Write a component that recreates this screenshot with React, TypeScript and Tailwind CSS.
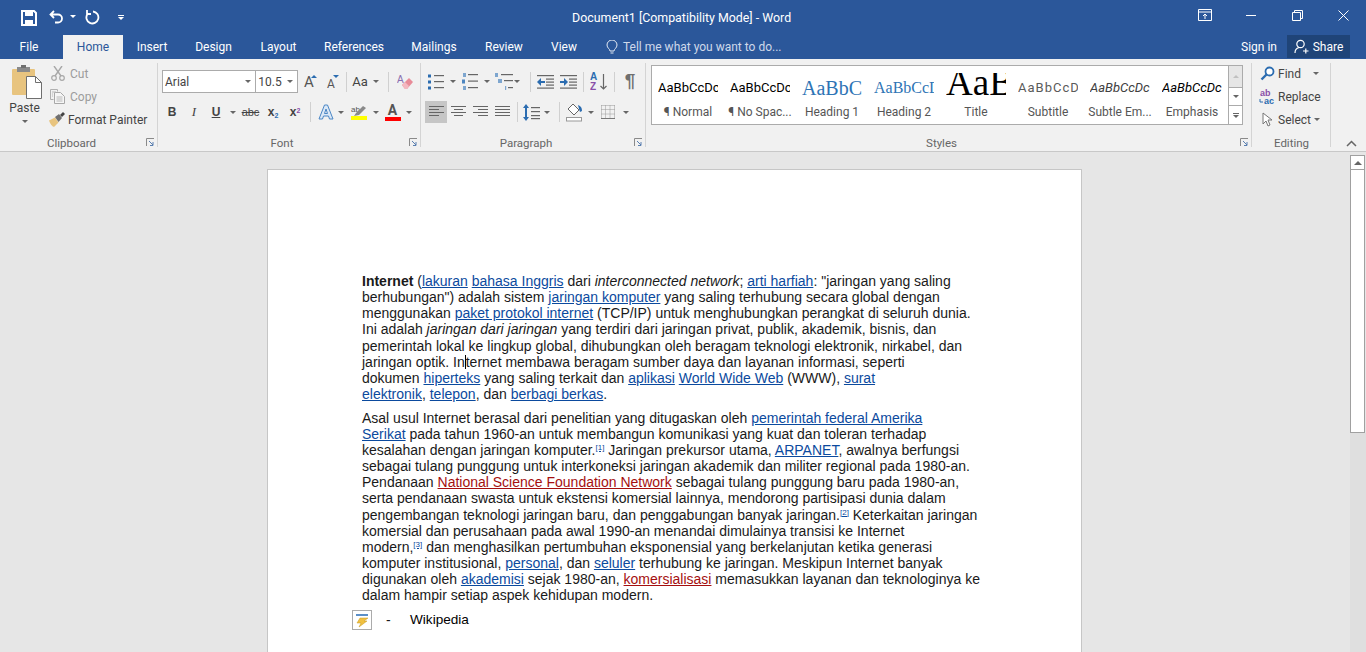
import type { ReactNode } from 'react';

const ui = "font-['Roboto','Noto_Sans',sans-serif]";

const tabs = [
  { label: 'Insert', w: 'w-[58px]' },
  { label: 'Design', w: 'w-[65px]' },
  { label: 'Layout', w: 'w-[65px]' },
  { label: 'References', w: 'w-[86px]' },
  { label: 'Mailings', w: 'w-[74px]' },
  { label: 'Review', w: 'w-[66px]' },
  { label: 'View', w: 'w-[54px]' },
];

const styleItems = [
  { label: '¶ Normal', preview: 'AaBbCcDc', cls: 'text-[13px] text-black' },
  { label: '¶ No Spac...', preview: 'AaBbCcDc', cls: 'text-[13px] text-black' },
  { label: 'Heading 1', preview: 'AaBbC', cls: "font-['Liberation_Serif',serif] text-[20px] text-[#2e74b5]" },
  { label: 'Heading 2', preview: 'AaBbCcD', cls: "font-['Liberation_Serif',serif] text-[16px] text-[#2e74b5]" },
  { label: 'Title', preview: 'AaB', cls: "-translate-y-[6px] font-['Liberation_Serif',serif] text-[37px] leading-[37px] text-black" },
  { label: 'Subtitle', preview: 'AaBbCcD', cls: 'text-[13px] tracking-[1px] text-[#5a5a5a]' },
  { label: 'Subtle Em...', preview: 'AaBbCcDc', cls: 'text-[13px] italic text-[#404040]' },
  { label: 'Emphasis', preview: 'AaBbCcDc', cls: 'text-[13px] italic text-black' },
];

function Caret({ w = 'w-[12px]', color = 'border-t-[#666]' }: { w?: string; color?: string }) {
  return (
    <div className={`flex justify-center ${w}`}>
      <div className={`h-0 w-0 border-x-[3px] border-t-[3px] border-x-transparent ${color}`} />
    </div>
  );
}

function Launcher() {
  return (
    <svg width="9" height="9" viewBox="0 0 9 9" className="shrink-0">
      <path d="M.5 8V.5H8" fill="none" stroke="#8a8a8a" />
      <path d="M3 3l4 4M7 4v3.5H4" fill="none" stroke="#5a7fb0" />
    </svg>
  );
}

function VSep() {
  return <div className="h-[20px] w-px bg-[#d0d0d0]" />;
}

function Cell({ w, children, active }: { w: string; children: ReactNode; active?: boolean }) {
  return (
    <div className={`flex h-[22px] items-center justify-center ${w} ${active ? 'bg-[#c6c6c6]' : ''}`}>
      {children}
    </div>
  );
}

function Group({ w, label, launcher, children }: { w: string; label: string; launcher?: boolean; children: ReactNode }) {
  return (
    <div className={`relative flex h-[89px] shrink-0 flex-col ${w}`}>
      <div className="min-h-0 flex-1">{children}</div>
      <div className={`h-[17px] pt-px text-center text-[11.5px] leading-[17px] text-[#666] ${launcher ? 'pr-[15px]' : ''}`}>{label}</div>
      {launcher && (
        <div className="absolute bottom-[4px] right-[3px] flex">
          <Launcher />
        </div>
      )}
      <div className="absolute right-0 top-[1px] h-[84px] w-px bg-[#d4d4d4]" />
    </div>
  );
}

function Lines({ rows, color = '#666', w = 15 }: { rows: [number, number][]; color?: string; w?: number }) {
  return (
    <svg width={w} height="14" viewBox={`0 0 ${w} 14`}>
      {rows.map(([a, b], i) => (
        <rect key={i} x={a} y={1 + i * 3} width={b - a} height="1" fill={color} />
      ))}
    </svg>
  );
}

function Bullets() {
  return (
    <svg width="16" height="16" viewBox="0 0 16 16">
      {[2, 8, 14].map((y) => (
        <g key={y}>
          <rect x="0" y={y - 1.5} width="3" height="3" fill="#2b6cb0" />
          <rect x="6" y={y - 1} width="10" height="1.2" fill="#666" />
        </g>
      ))}
    </svg>
  );
}

function Numbering() {
  return (
    <svg width="16" height="17" viewBox="0 0 16 17">
      {[2, 8.5, 15].map((y, i) => (
        <g key={y}>
          <rect x={i === 1 ? 0 : 1} y={y - 2} width="3" height="4" fill={i === 1 ? '#4e86c0' : '#7ea6cf'} />
          <rect x="6" y={y - 1} width="10" height="1.2" fill="#666" />
        </g>
      ))}
    </svg>
  );
}

function Multilevel() {
  return (
    <svg width="18" height="17" viewBox="0 0 18 17">
      <rect x="0" y="0" width="3" height="4" fill="#7ea6cf" />
      <rect x="6" y="1" width="12" height="1.2" fill="#666" />
      <rect x="3" y="6" width="4" height="4" fill="#7ea6cf" />
      <rect x="9" y="7" width="9" height="1.2" fill="#666" />
      <rect x="10" y="13" width="1.2" height="4" fill="#7ea6cf" />
      <rect x="13" y="14" width="5" height="1.2" fill="#666" />
    </svg>
  );
}

function Indent({ flip }: { flip?: boolean }) {
  return (
    <svg width="17" height="14" viewBox="0 0 17 14">
      <rect x="0" y="0" width="17" height="1.2" fill="#666" />
      <rect x="0" y="12.5" width="17" height="1.2" fill="#666" />
      {[3.5, 6.5, 9.5].map((y) => (
        <rect key={y} x="9" y={y} width="8" height="1.2" fill="#666" />
      ))}
      <path d={flip ? 'M0 6h4V3l4 4-4 4V8H0z' : 'M8 6H4V3L0 7l4 4V8h4z'} fill="#2b6cb0" />
    </svg>
  );
}

function Sort() {
  return (
    <svg width="18" height="19" viewBox="0 0 18 19">
      <text x="0" y="8" fontSize="10" fontWeight="700" fill="#2b6cb0" fontFamily="Liberation Sans">A</text>
      <text x="0" y="18" fontSize="10" fontWeight="700" fill="#8a4fa8" fontFamily="Liberation Sans">Z</text>
      <path d="M13.5 2v15M10.5 14l3 3 3-3" fill="none" stroke="#666" strokeWidth="1.2" />
    </svg>
  );
}

function LineSpacing() {
  return (
    <svg width="17" height="17" viewBox="0 0 17 17">
      <path d="M3 0l3 4H4v9h2l-3 4-3-4h2V4H0z" fill="#2b6cb0" />
      {[3, 7, 11, 14].map((y) => (
        <rect key={y} x="8" y={y} width="9" height="1.2" fill="#666" />
      ))}
    </svg>
  );
}

function Shading() {
  return (
    <svg width="17" height="19" viewBox="0 0 17 19">
      <path d="M7 1l6 6-5 5-6-6z" fill="#fff" stroke="#666" />
      <path d="M12 2c3 1 4 3 4 6l-2 1-1-3z" fill="#2b6cb0" />
      <rect x="0.5" y="14.5" width="15" height="3.5" fill="#fff" stroke="#999" />
    </svg>
  );
}

function Borders() {
  return (
    <svg width="14" height="14" viewBox="0 0 14 14">
      <path d="M.5 .5h13M.5 4.5h13M.5 9h13M.5 .5v13M4.5 .5v13M9 .5v13M13.5 .5v13" fill="none" stroke="#999" strokeDasharray="1 1" />
      <path d="M0 13.5h14" stroke="#777" />
    </svg>
  );
}

function PasteIcon() {
  return (
    <svg width="31" height="34" viewBox="0 0 31 34" className="ml-[3px]">
      <rect x="1" y="4" width="23" height="26" rx="1" fill="#e8c47f" />
      <rect x="6" y="2" width="13" height="5" fill="#8a8a8a" />
      <rect x="10" y="0" width="5" height="3" fill="#6f6f6f" />
      <path d="M15.5 11.5h9l6 6v16h-15z" fill="#fff" stroke="#6f6f6f" />
      <path d="M24.5 11.5v6h6" fill="none" stroke="#6f6f6f" />
    </svg>
  );
}

function CutIcon() {
  return (
    <svg width="14" height="15" viewBox="0 0 14 15">
      <path d="M3 0l7 10M11 0L4 10" fill="none" stroke="#a8a8a8" strokeWidth="1.4" />
      <circle cx="3" cy="12" r="2.3" fill="none" stroke="#a8a8a8" strokeWidth="1.2" />
      <circle cx="11" cy="12" r="2.3" fill="none" stroke="#a8a8a8" strokeWidth="1.2" />
    </svg>
  );
}

function CopyIcon() {
  return (
    <svg width="15" height="15" viewBox="0 0 15 15">
      <path d="M.5.5h7v2M.5.5v10h3" fill="none" stroke="#b0b0b0" />
      <path d="M4.5 3.5h6l4 4v7h-10z" fill="#f6f6f6" stroke="#a8a8a8" />
      <path d="M6.5 8h6M6.5 10h6M6.5 12h6M2 3h4M2 5h1M2 7h1" stroke="#b8b8b8" />
    </svg>
  );
}

function PainterIcon() {
  return (
    <svg width="16" height="15" viewBox="0 0 16 15">
      <path d="M0 8.5l6-3 3.5 5L5 15c-2-.5-4-3.5-5-6.5z" fill="#e8c47f" />
      <path d="M6 5l4-3 3 4-3.5 4z" fill="#6f6f6f" />
      <path d="M11 3l3-3 2 2-3 3z" fill="#444" />
    </svg>
  );
}

function EraserIcon() {
  return (
    <svg width="16" height="16" viewBox="0 0 16 16">
      <text x="0" y="9" fontSize="10" fill="#8a6fb0" fontFamily="Liberation Sans">A</text>
      <path d="M5 11l7-7 4 4-6 7H8z" fill="#e88b98" />
      <path d="M5 11l3-3 4 4-2 3H8z" fill="#f4b8c0" />
    </svg>
  );
}

function TextEffects() {
  return (
    <svg width="16" height="16" viewBox="0 0 16 16">
      <path d="M1 15L6.5 1h3L15 15h-3.5l-1-3h-5l-1 3zM6.5 9.5h3L8 5z" fill="#dbe8f6" stroke="#4a86c5" strokeWidth="1" />
    </svg>
  );
}

function HighlightIcon() {
  return (
    <div className="flex w-[16px] flex-col">
      <svg width="16" height="12" viewBox="0 0 16 12">
        <text x="0" y="8" fontSize="8" fill="#555" fontFamily="Liberation Sans">ab</text>
        <path d="M3 12l2-3 7-7 3 2-7 7z" fill="#8a8a8a" />
      </svg>
      <div className="h-[4px] bg-[#ffff00]" />
    </div>
  );
}

function ColorA() {
  return (
    <div className="flex w-[16px] flex-col items-center">
      <span className="text-[14px] font-bold leading-[13px] text-[#555]">A</span>
      <div className="h-[4px] w-full bg-[#ff0000]" />
    </div>
  );
}

function GrowA({ shrink }: { shrink?: boolean }) {
  return (
    <div className="relative flex h-[16px] w-[16px] items-end justify-center">
      <span className={`leading-none text-[#555] ${shrink ? 'text-[12px]' : 'text-[15px]'}`}>A</span>
      <div className={`absolute right-0 top-[1px] h-0 w-0 border-x-[3px] border-x-transparent ${shrink ? 'border-t-[3px] border-t-[#2b6cb0]' : 'border-b-[3px] border-b-[#2b6cb0]'}`} />
    </div>
  );
}

function Doc() {
  const a = 'text-[#0b4a9e] underline';
  const r = 'text-[#a50f0f] underline';
  const s = 'relative -top-[5px] text-[8px] leading-none text-[#0b4a9e] underline';
  return (
    <div className="font-['Liberation_Sans',Arial,sans-serif] text-[14px] leading-[16.1px] text-[#1a1a1a]">
      <p className="whitespace-nowrap">
        <b>Internet</b> (<span className={a}>lakuran</span> <span className={a}>bahasa Inggris</span> dari <i>interconnected network</i>; <span className={a}>arti harfiah</span>: "jaringan yang saling<br />
        berhubungan") adalah sistem <span className={a}>jaringan komputer</span> yang saling terhubung secara global dengan<br />
        menggunakan <span className={a}>paket protokol internet</span> (TCP/IP) untuk menghubungkan perangkat di seluruh dunia.<br />
        Ini adalah <i>jaringan dari jaringan</i> yang terdiri dari jaringan privat, publik, akademik, bisnis, dan<br />
        pemerintah lokal ke lingkup global, dihubungkan oleh beragam teknologi elektronik, nirkabel, dan<br />
        jaringan optik. In<span className="inline-block h-[14px] w-0 border-l border-black align-[-2px]" />ternet membawa beragam sumber daya dan layanan informasi, seperti<br />
        dokumen <span className={a}>hiperteks</span> yang saling terkait dan <span className={a}>aplikasi</span> <span className={a}>World Wide Web</span> (WWW), <span className={a}>surat</span><br />
        <span className={a}>elektronik</span>, <span className={a}>telepon</span>, dan <span className={a}>berbagi berkas</span>.
      </p>
      <p className="mt-2 whitespace-nowrap">
        Asal usul Internet berasal dari penelitian yang ditugaskan oleh <span className={a}>pemerintah federal Amerika</span><br />
        <span className={a}>Serikat</span> pada tahun 1960-an untuk membangun komunikasi yang kuat dan toleran terhadap<br />
        kesalahan dengan jaringan komputer.<span className={s}>[1]</span> Jaringan prekursor utama, <span className={a}>ARPANET</span>, awalnya berfungsi<br />
        sebagai tulang punggung untuk interkoneksi jaringan akademik dan militer regional pada 1980-an.<br />
        Pendanaan <span className={r}>National Science Foundation Network</span> sebagai tulang punggung baru pada 1980-an,<br />
        serta pendanaan swasta untuk ekstensi komersial lainnya, mendorong partisipasi dunia dalam<br />
        pengembangan teknologi jaringan baru, dan penggabungan banyak jaringan.<span className={s}>[2]</span> Keterkaitan jaringan<br />
        komersial dan perusahaan pada awal 1990-an menandai dimulainya transisi ke Internet<br />
        modern,<span className={s}>[3]</span> dan menghasilkan pertumbuhan eksponensial yang berkelanjutan ketika generasi<br />
        komputer institusional, <span className={a}>personal</span>, dan <span className={a}>seluler</span> terhubung ke jaringan. Meskipun Internet banyak<br />
        digunakan oleh <span className={a}>akademisi</span> sejak 1980-an, <span className={r}>komersialisasi</span> memasukkan layanan dan teknologinya ke<br />
        dalam hampir setiap aspek kehidupan modern.
      </p>
      <div className="-ml-[10px] mt-[7px] flex h-[20px] items-center">
        <div className="flex h-[20px] w-[20px] items-center justify-center border border-[#ababab] bg-white">
          <svg width="15" height="15" viewBox="0 0 15 15">
            <rect x="1" y="1" width="12" height="2" fill="#5b8fc7" />
            <path d="M5 5h8L9 8h3l-8 6 2-4H2z" fill="#f0c040" stroke="#c89a20" strokeWidth=".5" />
          </svg>
        </div>
        <span className="ml-[14px] w-[24px]">-</span>
        <span className="text-[13.6px] text-black">Wikipedia</span>
      </div>
    </div>
  );
}

export default function App() {
  return (
    <div className={`flex h-[652px] w-[1366px] flex-col overflow-hidden bg-[#e6e6e6] ${ui}`}>
      {/* title bar */}
      <div className="relative flex h-[35px] shrink-0 items-center bg-[#2b579a] pb-[5px] pl-[21px] text-white">
        <svg width="16" height="16" viewBox="0 0 16 16" className="mt-[5px]">
          <path d="M1 1h12l2 2v12H1z" fill="none" stroke="#fff" strokeWidth="2" />
          <rect x="4" y="1" width="8" height="5" fill="#fff" />
          <rect x="4" y="10" width="8" height="5" fill="#fff" />
        </svg>
        <svg width="16" height="14" viewBox="0 0 16 14" className="ml-[12px] mt-[3px]">
          <path d="M5 1L1.5 4.5 5 8M2 4.5h7a4 4 0 0 1 0 8H6" fill="none" stroke="#fff" strokeWidth="1.8" />
        </svg>
        <div className="ml-[5px] mt-[3px]"><Caret w="w-[6px]" color="border-t-white" /></div>
        <svg width="16" height="16" viewBox="0 0 16 16" className="ml-[8px] mt-[3px]">
          <path d="M9 2.5a6 6 0 1 1-5.5 2.5M3 1v4h4" fill="none" stroke="#fff" strokeWidth="1.8" />
        </svg>
        <div className="ml-[17px] mt-[4px] flex w-[8px] flex-col items-center gap-[1px]">
          <div className="h-px w-[6px] bg-white" />
          <Caret w="w-[6px]" color="border-t-white" />
        </div>
        <div className="absolute left-[572px] top-[9px] text-[12.4px] leading-[17px]">Document1 [Compatibility Mode] - Word</div>
        <div className="ml-auto flex h-full items-center">
          <div className="flex w-[46px] justify-center">
            <svg width="14" height="12" viewBox="0 0 14 12">
              <path d="M.5.5h13v11H.5zM.5 3h13" fill="none" stroke="#fff" />
              <path d="M7 10V5M5 7l2-2 2 2" fill="none" stroke="#fff" />
            </svg>
          </div>
          <div className="flex w-[46px] justify-center"><div className="h-px w-[10px] bg-white" /></div>
          <div className="flex w-[46px] justify-center">
            <svg width="11" height="11" viewBox="0 0 11 11">
              <path d="M.5 2.5h8v8h-8zM2.5 2.5v-2h8v8h-2" fill="none" stroke="#fff" />
            </svg>
          </div>
          <div className="flex w-[46px] justify-center">
            <svg width="11" height="11" viewBox="0 0 11 11">
              <path d="M.5.5l10 10M10.5.5l-10 10" fill="none" stroke="#fff" />
            </svg>
          </div>
        </div>
      </div>

      {/* tabs */}
      <div className="flex h-[24px] shrink-0 items-stretch bg-[#2b579a] text-[12px] text-white">
        <div className="flex w-[58px] items-center justify-center">File</div>
        <div className="ml-[5px] flex w-[60px] items-center justify-center bg-[#f1f1f1] text-[#2b579a]">Home</div>
        {tabs.map((t) => (
          <div key={t.label} className={`flex items-center justify-center ${t.w}`}>{t.label}</div>
        ))}
        <div className="ml-[15px] flex items-center text-[#cfd9ea]">
          <svg width="12" height="15" viewBox="0 0 12 15">
            <path d="M4 11c0-2-3-3-3-6a5 5 0 0 1 10 0c0 3-3 4-3 6zM4.5 13h3" fill="none" stroke="#e4eaf4" />
          </svg>
          <span className="ml-[5px]">Tell me what you want to do...</span>
        </div>
        <div className="ml-auto flex items-center pr-[16px]">
          <span>Sign in</span>
          <div className="ml-[10px] flex h-[23px] w-[63px] items-center justify-center gap-[4px] self-start bg-[#1f4478]">
            <svg width="15" height="15" viewBox="0 0 15 15">
              <circle cx="6.5" cy="5" r="3.7" fill="none" stroke="#fff" strokeWidth="1.2" />
              <path d="M1 14c0-3 2-5 4-5.5M9 12h5.5M11.8 9.5v5" fill="none" stroke="#fff" strokeWidth="1.2" />
            </svg>
            <span>Share</span>
          </div>
        </div>
      </div>

      {/* ribbon */}
      <div className="flex h-[93px] shrink-0 border-b border-[#c8c8c8] bg-[#f1f1f1] pt-[3px] text-[12px] text-[#444]">
        <Group w="w-[158px]" label="Clipboard" launcher>
          <div className="flex">
            <div className="flex w-[49px] flex-col items-center pt-[3px]">
              <PasteIcon />
              <span className="mt-px leading-[17px]">Paste</span>
              <div className="mt-[3px]"><Caret /></div>
            </div>
            <div className="flex flex-col text-[#9c9c9c]">
              <div className="flex h-[23px] items-center gap-[5px] pl-[2px]"><CutIcon /><span>Cut</span></div>
              <div className="flex h-[23px] items-center gap-[5px] pl-[1px]"><CopyIcon /><span>Copy</span></div>
              <div className="flex h-[23px] items-center gap-[3px] text-[#444]"><PainterIcon /><span>Format Painter</span></div>
            </div>
          </div>
        </Group>

        <Group w="w-[263px]" label="Font" launcher>
          <div className="flex h-[31px] items-start pl-[4px] pt-[8px]">
            <div className="flex h-[23px] w-[95px] items-center justify-between border border-[#ababab] bg-white pl-[2px] pr-[2px]">
              <span>Arial</span><Caret w="w-[10px]" />
            </div>
            <div className="-ml-px flex h-[23px] w-[43px] items-center justify-between border border-[#ababab] bg-white pl-[2px] pr-[2px]">
              <span>10.5</span><Caret w="w-[10px]" />
            </div>
            <div className="flex h-[23px] items-center">
              <Cell w="w-[22px]"><GrowA /></Cell>
              <Cell w="w-[22px]"><GrowA shrink /></Cell>
              <div className="ml-[4px]"><VSep /></div>
              <Cell w="w-[26px]"><span className="text-[13px]">Aa</span></Cell>
              <Caret w="w-[6px]" />
              <div className="ml-[9px]"><VSep /></div>
              <Cell w="w-[32px]"><EraserIcon /></Cell>
            </div>
          </div>
          <div className="mt-[8px] flex h-[22px] items-center pl-[3px]">
            <Cell w="w-[22px]"><span className="font-['Liberation_Sans',sans-serif] text-[12px] font-bold">B</span></Cell>
            <Cell w="w-[22px]"><span className="font-['Liberation_Serif',serif] text-[13px] italic">I</span></Cell>
            <Cell w="w-[22px]"><span className="font-['Liberation_Sans',sans-serif] text-[12px] font-bold underline">U</span></Cell>
            <Caret />
            <Cell w="w-[23px]"><span className="font-['Liberation_Sans',sans-serif] text-[11px] line-through">abc</span></Cell>
            <Cell w="w-[22px]"><span className="font-['Liberation_Sans',sans-serif] text-[12px] font-bold">x<sub className="text-[7px] text-[#2b6cb0]">2</sub></span></Cell>
            <Cell w="w-[22px]"><span className="font-['Liberation_Sans',sans-serif] text-[12px] font-bold">x<sup className="text-[7px] text-[#8a4fa8]">2</sup></span></Cell>
            <div className="ml-[4px]"><VSep /></div>
            <Cell w="w-[30px]"><TextEffects /></Cell>
            <div className="-ml-[3px]"><Caret w="w-[6px]" /></div>
            <Cell w="w-[29px]"><HighlightIcon /></Cell>
            <Caret w="w-[6px]" />
            <Cell w="w-[27px]"><ColorA /></Cell>
            <Caret w="w-[6px]" />
          </div>
        </Group>

        <Group w="w-[225px]" label="Paragraph" launcher>
          <div className="flex h-[31px] items-center pl-[6px] pt-[8px]">
            <Cell w="w-[18px]"><Bullets /></Cell>
            <Caret w="w-[16px]" />
            <Cell w="w-[18px]"><Numbering /></Cell>
            <Caret w="w-[16px]" />
            <Cell w="w-[18px]"><Multilevel /></Cell>
            <Caret w="w-[8px]" />
            <div className="ml-[9px]"><VSep /></div>
            <Cell w="w-[28px]"><Indent /></Cell>
            <Cell w="w-[18px]"><Indent flip /></Cell>
            <div className="ml-[6px]"><VSep /></div>
            <Cell w="w-[30px]"><Sort /></Cell>
            <VSep />
            <Cell w="w-[30px]"><span className="font-['Liberation_Sans',sans-serif] text-[19px] font-bold text-[#6f6f6f]">¶</span></Cell>
          </div>
          <div className="mt-[8px] flex h-[22px] items-center pl-[4px]">
            <Cell w="w-[22px]" active><Lines rows={[[0, 15], [0, 10], [0, 15], [0, 10]]} /></Cell>
            <Cell w="w-[22px]"><Lines rows={[[0, 15], [3, 12], [0, 15], [3, 12]]} /></Cell>
            <Cell w="w-[22px]"><Lines rows={[[0, 15], [5, 15], [0, 15], [5, 15]]} /></Cell>
            <Cell w="w-[22px]"><Lines rows={[[0, 15], [0, 15], [0, 15], [0, 15]]} /></Cell>
            <div className="ml-[4px]"><VSep /></div>
            <Cell w="w-[26px]"><LineSpacing /></Cell>
            <Caret w="w-[6px]" />
            <div className="ml-[9px]"><VSep /></div>
            <Cell w="w-[28px]"><Shading /></Cell>
            <Caret w="w-[6px]" />
            <Cell w="w-[28px]"><Borders /></Cell>
            <Caret w="w-[8px]" />
          </div>
        </Group>

        <Group w="w-[606px]" label="Styles" launcher>
          <div className="ml-[5px] mt-[3px] flex h-[60px] w-[592px] overflow-hidden border border-[#ababab] bg-white">
            {styleItems.map((s) => (
              <div key={s.label} className="flex w-[72px] shrink-0 flex-col items-center">
                <div className="mt-[7px] flex h-[30px] w-[60px] items-center overflow-hidden whitespace-nowrap">
                  <span className={s.cls}>{s.preview}</span>
                </div>
                <div className="mt-px whitespace-nowrap leading-[17px] text-[#555]">{s.label}</div>
              </div>
            ))}
            <div className="flex w-[14px] shrink-0 flex-col border-l border-[#ababab] bg-[#f1f1f1]">
              <div className="flex h-[21px] items-center justify-center bg-[#e6e6e6]">
                <div className="h-0 w-0 border-x-[3px] border-b-[3px] border-x-transparent border-b-[#c0c0c0]" />
              </div>
              <div className="flex h-[19px] items-center justify-center border-y border-[#ababab] bg-white"><Caret w="w-[6px]" /></div>
              <div className="flex flex-1 flex-col items-center justify-center gap-[1px] bg-white">
                <div className="h-px w-[6px] bg-[#666]" />
                <Caret w="w-[6px]" />
              </div>
            </div>
          </div>
        </Group>

        <Group w="w-[79px]" label="Editing">
          <div className="flex flex-col pl-[8px]">
            <div className="flex h-[23px] items-center gap-[3px]">
              <svg width="15" height="15" viewBox="0 0 15 15">
                <circle cx="9.5" cy="5.5" r="4" fill="#fff" stroke="#2b6cb0" strokeWidth="1.8" />
                <path d="M6.5 8.5L1.5 13.5" stroke="#2b6cb0" strokeWidth="2.4" />
              </svg>
              <span>Find</span>
              <div className="ml-[9px]"><Caret w="w-[6px]" /></div>
            </div>
            <div className="flex h-[23px] items-center gap-[2px]">
              <svg width="17" height="17" viewBox="0 0 17 17" className="-ml-px">
                <text x="1" y="7.5" fontSize="9" fill="#8a4fa8" fontWeight="700" fontFamily="Liberation Sans">ab</text>
                <text x="5" y="16" fontSize="9" fill="#2b6cb0" fontWeight="700" fontFamily="Liberation Sans">ac</text>
                <path d="M1 11v3h3" fill="none" stroke="#2b6cb0" />
              </svg>
              <span>Replace</span>
            </div>
            <div className="flex h-[23px] items-center gap-[3px]">
              <svg width="14" height="16" viewBox="0 0 14 16" className="ml-px">
                <path d="M2 1v11l3-3 2 5 2-1-2-5h4z" fill="#fff" stroke="#777" />
              </svg>
              <span>Select</span>
              <Caret w="w-[6px]" />
            </div>
          </div>
        </Group>

        <div className="flex flex-1 items-end justify-end pb-[4px] pr-[9px]">
          <svg width="11" height="7" viewBox="0 0 11 7">
            <path d="M1 6l4.5-4.5L10 6" fill="none" stroke="#666" strokeWidth="1.5" />
          </svg>
        </div>
      </div>

      {/* document area */}
      <div className="flex min-h-0 flex-1">
        <div className="min-w-0 flex-1 pl-[267px] pt-[17px]">
          <div className="h-[800px] w-[815px] border border-[#c6c6c6] bg-white pl-[94px] pt-[103.2px]">
            <Doc />
          </div>
        </div>
        <div className="flex w-[16px] shrink-0 flex-col pr-px pt-[3px]">
          <div className="flex h-[15px] shrink-0 items-center justify-center border border-[#a0a0a0] bg-white">
            <div className="h-0 w-0 border-x-[4px] border-b-[4px] border-x-transparent border-b-[#666]" />
          </div>
          <div className="-mt-px h-[264px] shrink-0 border border-[#a0a0a0] bg-white" />
          <div className="-mr-px flex-1 bg-[#dfdfdf]" />
        </div>
      </div>
    </div>
  );
}
